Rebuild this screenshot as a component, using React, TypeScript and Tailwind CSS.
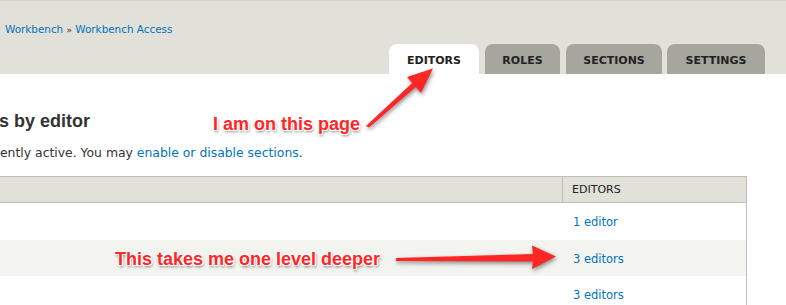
import React from "react";

const annot =
  "absolute whitespace-nowrap font-['Liberation_Sans',Arial,sans-serif] font-bold text-[18px] leading-[18px] text-[#ff2626] [text-shadow:-1px_-1px_0_#fff,1px_-1px_0_#fff,-1px_1px_0_#fff,1px_1px_0_#fff,0_-1px_0_#fff,0_1px_0_#fff,-1px_0_0_#fff,1px_0_0_#fff,1px_2px_3px_rgba(0,0,0,0.55)]";

export default function App() {
  return (
    <div className="relative w-[786px] h-[305px] overflow-hidden bg-white font-['DejaVu_Sans',Verdana,sans-serif] text-[#333]">
      {/* header */}
      <div className="h-[74px] bg-[#e1e0d9] border-t border-[#d3d2ca] flex flex-col">
        <div className="pt-[20px] pl-[5px] text-[10.4px] leading-[16px] text-[#0074bd] whitespace-nowrap">
          Workbench <span className="text-[#4a2f14] text-[9px]">»</span> Workbench Access
        </div>
        <div className="mt-auto flex items-end pl-[389px]">
          <div className="w-[90px] h-[30px] pt-[5px] rounded-t-[8px] bg-white flex items-center justify-center text-[11px] font-bold text-[#222]">
            EDITORS
          </div>
          <div className="ml-[6px] w-[75px] h-[30px] pt-[5px] rounded-t-[8px] bg-[#a6a69f] flex items-center justify-center text-[11px] font-bold text-[#222]">
            ROLES
          </div>
          <div className="ml-[6px] w-[96px] h-[30px] pt-[5px] rounded-t-[8px] bg-[#a6a69f] flex items-center justify-center text-[11px] font-bold text-[#222]">
            SECTIONS
          </div>
          <div className="ml-[5px] w-[98px] h-[30px] pt-[5px] rounded-t-[8px] bg-[#a6a69f] flex items-center justify-center text-[11px] font-bold text-[#222]">
            SETTINGS
          </div>
        </div>
      </div>

      {/* content */}
      <div className="mt-[36px] h-[22px] text-[18px] leading-[22px] font-bold font-['Liberation_Sans',Arial,sans-serif] text-[#333] whitespace-nowrap -ml-[1px]">
        s by editor
      </div>
      <div className="mt-[12px] text-[12.4px] leading-[18px] whitespace-nowrap">
        ently active. You may <span className="text-[#0074bd]">enable or disable sections</span>.
      </div>

      {/* table */}
      <div className="mt-[14px] -ml-[1px] w-[748px] border-x border-[#bebeb6] text-[11.5px]">
        <div className="flex h-[27px] bg-[#e1e1da] border-y border-[#bebeb6]">
          <div className="w-[563px] border-r border-[#bebeb6]"></div>
          <div className="flex-1 flex items-center pl-[9px] pt-[2px] text-[11px] text-[#222]">EDITORS</div>
        </div>
        <div className="flex h-[37px] bg-white">
          <div className="w-[563px]"></div>
          <div className="flex-1 flex items-center pl-[10px] pt-[3px] text-[#0074bd]">1 editor</div>
        </div>
        <div className="flex h-[36px] bg-[#f3f3ef]">
          <div className="w-[563px]"></div>
          <div className="flex-1 flex items-center pl-[10px] pt-[3px] text-[#0074bd]">3 editors</div>
        </div>
        <div className="flex h-[36px] bg-white">
          <div className="w-[563px]"></div>
          <div className="flex-1 flex items-center pl-[10px] pt-[3px] text-[#0074bd]">3 editors</div>
        </div>
      </div>

      {/* annotations */}
      <svg
        className="absolute left-0 top-0 drop-shadow-[1px_2px_2px_rgba(0,0,0,0.45)]"
        width="786"
        height="305"
        viewBox="0 0 786 305"
      >
        <polygon
          points="366,126 412.2,83 407,77 433,68.5 421,93 415.8,87 369,127.5"
          fill="#ff2626"
        />
        <polygon
          points="396,258 533,254 532,245.5 556,256.5 532,269 533,261.5 396,261"
          fill="#ff2626"
        />
      </svg>
      <div className={`${annot} left-[213px] top-[115px]`}>I am on this page</div>
      <div className={`${annot} left-[115px] top-[250px]`}>This takes me one level deeper</div>
    </div>
  );
}
